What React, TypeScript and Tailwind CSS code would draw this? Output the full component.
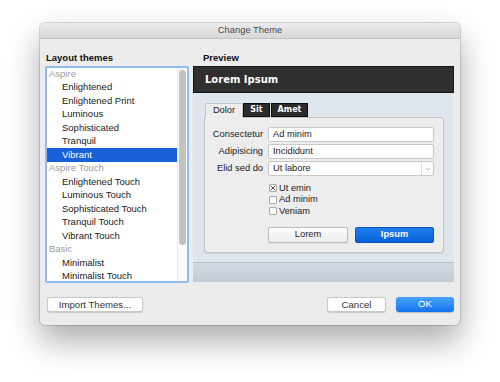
const layoutThemes: { name: string; header?: boolean; selected?: boolean }[] = [
  { name: 'Aspire', header: true },
  { name: 'Enlightened' },
  { name: 'Enlightened Print' },
  { name: 'Luminous' },
  { name: 'Sophisticated' },
  { name: 'Tranquil' },
  { name: 'Vibrant', selected: true },
  { name: 'Aspire Touch', header: true },
  { name: 'Enlightened Touch' },
  { name: 'Luminous Touch' },
  { name: 'Sophisticated Touch' },
  { name: 'Tranquil Touch' },
  { name: 'Vibrant Touch' },
  { name: 'Basic', header: true },
  { name: 'Minimalist' },
  { name: 'Minimalist Touch' },
];

function Checkbox({ label, checked }: { label: string; checked?: boolean }) {
  return (
    <div className="flex h-[11.5px] items-center gap-[2px]">
      <span className="flex h-[8px] w-[8px] items-center justify-center rounded-[1px] border border-[#a9a9a9] bg-white">
        {checked && (
          <svg viewBox="0 0 8 8" className="h-[6px] w-[6px]">
            <path d="M1 1 L7 7 M7 1 L1 7" stroke="#333" strokeWidth="1.2" />
          </svg>
        )}
      </span>
      <span className="text-[9.3px] leading-none text-[#222]">{label}</span>
    </div>
  );
}

function ThemePreview() {
  return (
    <div className="flex h-[216px] flex-col bg-[#dfe6ee]">
      <div className="flex h-[27px] shrink-0 items-center border border-[#151515] bg-[#2f2f2f] pl-[11px] font-['DejaVu_Sans',sans-serif] text-[10px] font-bold text-white">
        Lorem Ipsum
      </div>

      <div className="flex flex-col pl-[11px] pr-[10px] pt-[10px]">
        {/* tabs */}
        <div className="ml-[1px] flex h-[14px] items-stretch">
          <div className="-mb-px z-10 flex w-[38px] items-center justify-center rounded-t-[2px] border border-b-0 border-[#c4c4c4] bg-[#ededed] text-[9.3px] text-[#222]">
            Dolor
          </div>
          <div className="flex w-[27px] items-center justify-center border border-[#0c0c0c] bg-[#2b2b2b] font-['DejaVu_Sans',sans-serif] text-[8px] font-bold text-white">
            Sit
          </div>
          <div className="ml-px flex w-[37px] items-center justify-center border border-[#0c0c0c] bg-[#2b2b2b] font-['DejaVu_Sans',sans-serif] text-[8px] font-bold text-white">
            Amet
          </div>
        </div>

        {/* tab panel */}
        <div className="flex h-[136px] flex-col rounded-[3px] rounded-tl-none border border-[#c4c4c4] bg-[#ededed] pr-[9px] pt-[9px] shadow-[0_1px_1px_rgba(0,0,0,0.08)]">
          <div className="grid grid-cols-[58px_1fr] gap-x-[5px] gap-y-[2px] text-[9.3px] text-[#222]">
            <div className="flex h-[15px] items-center justify-end">Consectetur</div>
            <div className="flex h-[15px] items-center rounded-[2px] border border-[#c9c9c9] bg-white pl-[4px]">Ad minim</div>
            <div className="flex h-[15px] items-center justify-end">Adipisicing</div>
            <div className="flex h-[15px] items-center rounded-[2px] border border-[#c9c9c9] bg-white pl-[4px]">Incididunt</div>
            <div className="flex h-[15px] items-center justify-end">Elid sed do</div>
            <div className="flex h-[15px] items-center rounded-[2px] border border-[#c9c9c9] bg-white">
              <span className="flex-1 pl-[4px]">Ut labore</span>
              <span className="flex h-full w-[12px] items-center justify-center border-l border-[#dcdcdc]">
                <svg viewBox="0 0 8 5" className="h-[4px] w-[6px]">
                  <path d="M1 1 L4 4 L7 1" fill="none" stroke="#9a9a9a" strokeWidth="1" />
                </svg>
              </span>
            </div>
          </div>

          <div className="ml-[64px] mt-[6.5px] flex flex-col">
            <Checkbox label="Ut emin" checked />
            <Checkbox label="Ad minim" />
            <Checkbox label="Veniam" />
          </div>

          <div className="ml-[63px] mt-[10px] flex gap-[7px]">
            <button className="h-[16px] w-[80px] rounded-[2px] border border-[#bdbdbd] bg-gradient-to-b from-[#fdfdfd] to-[#ececec] text-[9.3px] text-[#222] shadow-[0_1px_1px_rgba(0,0,0,0.08)]">
              Lorem
            </button>
            <button className="h-[16px] w-[79px] rounded-[2px] border border-[#0a55c0] bg-gradient-to-b from-[#1f7ff0] to-[#0860d6] text-[9.3px] font-bold text-white">
              Ipsum
            </button>
          </div>
        </div>
      </div>

      <div className="mt-[9px] flex-1 border-t border-[#b4bec9] bg-gradient-to-b from-[#d3dbe3] to-[#c2ccd6]" />
    </div>
  );
}

export default function App() {
  return (
    <div className="h-[382px] w-[500px] bg-white pt-[23px] font-['Liberation_Sans',Arial,sans-serif]">
      <div className="mx-auto flex h-[302px] w-[420px] flex-col rounded-[5px] bg-[#ececec] shadow-[0_16px_32px_rgba(0,0,0,0.33),0_0_0_1px_rgba(0,0,0,0.14)]">
        {/* title bar */}
        <div className="flex h-[16px] shrink-0 items-center justify-center rounded-t-[5px] border-b border-[#c3c3c3] bg-gradient-to-b from-[#ececec] to-[#d8d8d8] text-[9.4px] text-[#4a4a4a]">
          Change Theme
        </div>

        <div className="flex flex-1 flex-col pl-[5px] pr-[6px] pt-[13px]">
          <div className="flex gap-[4px]">
            {/* themes list */}
            <div className="flex w-[144px] flex-col">
              <div className="h-[14px] pl-px text-[9.5px] font-bold leading-[11px] text-[#111]">Layout themes</div>
              <div className="flex h-[217px] overflow-hidden rounded-[2px] border-2 border-[#8fbcf0] bg-white">
                <div className="flex-1 -mt-px">
                  {layoutThemes.map((t) => (
                    <div
                      key={t.name}
                      className={
                        'flex h-[13.5px] items-center text-[9.5px] ' +
                        (t.header
                          ? 'pl-[2px] text-[#9b9b9b]'
                          : t.selected
                            ? 'bg-[#1760d8] pl-[15px] text-white'
                            : 'pl-[15px] text-[#1a1a1a]')
                      }
                    >
                      {t.name}
                    </div>
                  ))}
                </div>
                <div className="w-[10px] border-l border-[#ececec] bg-[#fafafa] pl-[1px] pt-[2px]">
                  <div className="h-[175px] w-[7px] rounded-full bg-[#c2c2c2]" />
                </div>
              </div>
            </div>

            {/* preview */}
            <div className="flex flex-1 flex-col">
              <div className="h-[14px] pl-[10px] text-[9.5px] font-bold leading-[11px] text-[#111]">Preview</div>
              <ThemePreview />
            </div>
          </div>

          <div className="mt-[14px] flex items-center">
            <button className="ml-[2px] h-[15px] w-[96px] rounded-[3px] border border-[#c8c8c8] bg-white text-[9.6px] text-[#333] shadow-[0_0.5px_1px_rgba(0,0,0,0.15)]">
              Import Themes...
            </button>
            <div className="flex-1" />
            <button className="h-[15px] w-[59px] rounded-[3px] border border-[#c8c8c8] bg-white text-[9.6px] text-[#333] shadow-[0_0.5px_1px_rgba(0,0,0,0.15)]">
              Cancel
            </button>
            <button className="ml-[10px] h-[15px] w-[58px] rounded-[3px] bg-gradient-to-b from-[#4aa3ff] to-[#0f72f0] text-[9.6px] text-white shadow-[0_0.5px_1px_rgba(0,0,0,0.2)]">
              OK
            </button>
          </div>
        </div>
      </div>
    </div>
  );
}
